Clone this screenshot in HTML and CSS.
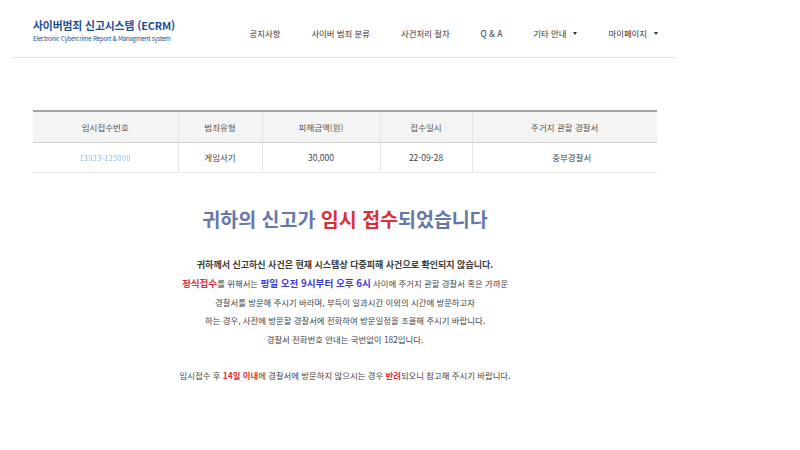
FILE: index.html
```html
<!DOCTYPE html>
<html lang="ko">
<head>
<meta charset="utf-8">
<title>사이버범죄 신고시스템 (ECRM)</title>
<link rel="stylesheet" href="styles.css">
</head>
<body>
<header class="header">
  <div class="logo">
    <div class="logo-title">사이버범죄 신고시스템 (ECRM)</div>
    <div class="logo-sub">Electronic Cybercrime Report &amp; Managment system</div>
  </div>
  <nav class="nav">
    <a class="nav-item">공지사항</a>
    <a class="nav-item">사이버 범죄 분류</a>
    <a class="nav-item">사건처리 절차</a>
    <a class="nav-item">Q &amp; A</a>
    <a class="nav-item dropdown">기타 안내<span class="caret"></span></a>
    <a class="nav-item dropdown">마이페이지<span class="caret"></span></a>
  </nav>
</header>
<main class="main">
  <table class="result">
    <thead>
      <tr>
        <th class="c1">임시접수번호</th>
        <th class="c2">범죄유형</th>
        <th class="c3">피해금액(원)</th>
        <th class="c4">접수일시</th>
        <th class="c5">주거지 관할 경찰서</th>
      </tr>
    </thead>
    <tbody>
      <tr>
        <td><span class="masked">13033-123000</span></td>
        <td>게임사기</td>
        <td>30,000</td>
        <td>22-09-28</td>
        <td class="station">중부경찰서</td>
      </tr>
    </tbody>
  </table>

  <h1 class="msg-title">귀하의 신고가 <span class="red">임시 접수</span>되었습니다</h1>

  <div class="msg-body">
    <p class="strong-line">귀하께서 신고하신 사건은 현재 시스템상 다중피해 사건으로 확인되지 않습니다.</p>
    <p><span class="hl-red">정식접수</span>를 위해서는 <span class="hl-blue">평일 오전 9시부터 오후 6시</span> 사이에 주거지 관할 경찰서 혹은 가까운</p>
    <p>경찰서를 방문해 주시기 바라며, 부득이 일과시간 이외의 시간에 방문하고자</p>
    <p>하는 경우, 사전에 방문할 경찰서에 전화하여 방문일정을 조율해 주시기 바랍니다.</p>
    <p>경찰서 전화번호 안내는 국번없이 182입니다.</p>
    <p class="notice">임시접수 후 <span class="b-red">14일 이내</span>에 경찰서에 방문하지 않으시는 경우 <span class="b-red">반려</span>되오니 참고해 주시기 바랍니다.</p>
  </div>
</main>
</body>
</html>
```
FILE: styles.css
```css
* { box-sizing: border-box; }
body {
  margin: 0;
  background: #fff;
  font-family: "Noto Sans CJK KR", "Noto Sans", sans-serif;
  color: #333;
}
.header {
  margin-left: 12px;
  width: 664px;
  height: 58px;
  border-bottom: 1px solid #e4e4e4;
  display: flex;
  justify-content: space-between;
  align-items: flex-start;
  padding-right: 18px;
}
.logo {
  padding: 17px 0 0 21px;
}
.logo-title {
  font-size: 10.8px;
  font-weight: 700;
  line-height: 16px;
  color: #1d4f91;
  letter-spacing: -0.1px;
}
.logo-sub {
  margin-top: 2px;
  font-size: 6.2px;
  line-height: 8px;
  color: #1d4f91;
  letter-spacing: -0.25px;
}
.nav {
  display: flex;
  gap: 31px;
  padding-top: 26px;
}
.nav-item {
  font-size: 8.4px;
  line-height: 14px;
  color: #333;
  display: flex;
  align-items: center;
}
.caret {
  margin-left: 7px;
  width: 0;
  height: 0;
  border-left: 2.5px solid transparent;
  border-right: 2.5px solid transparent;
  border-top: 3px solid #333;
}
.main {
  margin-left: 33px;
  width: 624px;
  padding-top: 52px;
}
.result {
  width: 624px;
  border-collapse: collapse;
  border-top: 2px solid #a3a3a3;
  table-layout: fixed;
}
.result th, .result td {
  font-size: 8.5px;
  font-weight: 400;
  color: #444;
  text-align: center;
  border-left: 1px solid #e6e6e6;
  padding: 0;
}
.result th:first-child, .result td:first-child { border-left: none; }
.result th {
  height: 31px;
  background: #f4f4f4;
  border-bottom: 1px solid #cfcfcf;
  color: #555;
}
.result td {
  height: 30px;
  border-bottom: 1px solid #ececec;
  color: #444;
}
.c1 { width: 145px; }
.c2 { width: 84px; }
.c3 { width: 118px; }
.c4 { width: 92px; }
.c5 { width: 185px; }
.masked {
  color: #8db7e6;
  font-size: 7px;
  filter: blur(0.5px);
  letter-spacing: 0.5px;
}
.result td.station { padding-left: 14px; }
.msg-title {
  margin: 31px 0 0;
  text-align: center;
  font-size: 19.5px;
  line-height: 30px;
  font-weight: 700;
  color: #6678a8;
}
.red { color: #d8303c; }
.msg-body {
  margin-top: 22px;
  text-align: center;
  font-size: 8.4px;
  line-height: 18.5px;
  color: #444;
}
.msg-body p { margin: 0; }
.strong-line { font-weight: 700; color: #3a3a3a; font-size: 9px; }
.hl-red { color: #d8303c; font-weight: 700; font-size: 9.6px; }
.hl-blue { color: #3c3cd8; font-weight: 700; font-size: 9.6px; }
.b-red { color: #d8303c; font-weight: 700; }
.notice { margin-top: 18px !important; }
```
